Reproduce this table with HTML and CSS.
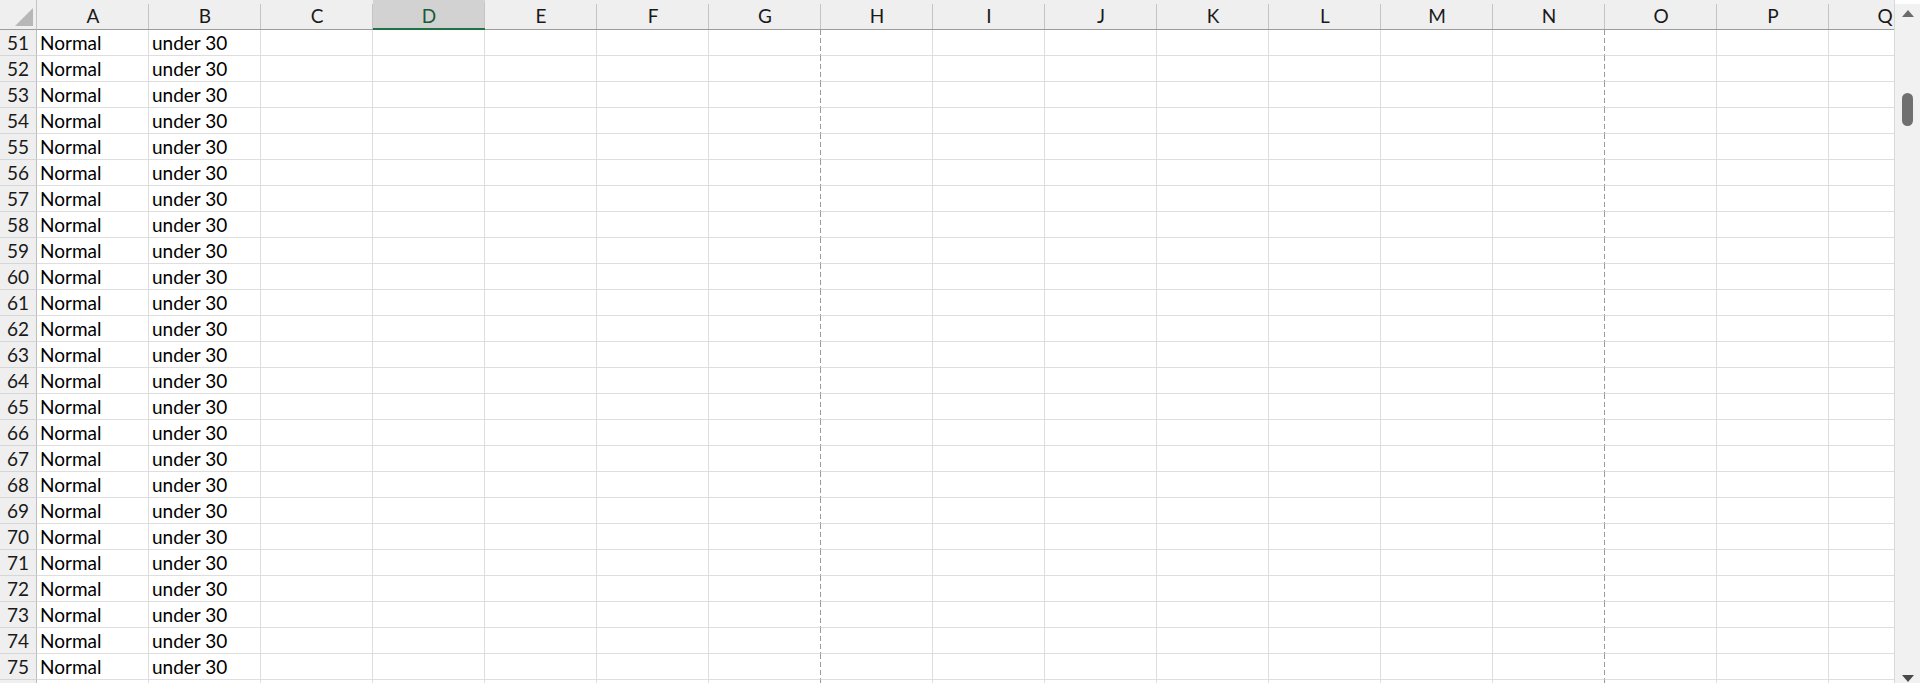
FILE: index.html
```html
<!DOCTYPE html>
<html>
<head>
<meta charset="utf-8">
<link rel="stylesheet" href="styles.css">
</head>
<body>
<div class="app">
  <div class="sheet">
    <table class="grid">
      <colgroup>
        <col class="col-rh"><col><col><col><col><col><col><col><col><col><col><col><col><col><col><col><col><col>
      </colgroup>
      <thead>
        <tr>
          <th class="corner"><span class="tri"></span></th>
          <th>A</th><th>B</th><th>C</th><th class="sel">D</th><th>E</th><th>F</th><th>G</th><th>H</th><th>I</th><th>J</th><th>K</th><th>L</th><th>M</th><th>N</th><th>O</th><th>P</th><th>Q</th>
        </tr>
      </thead>
      <tbody>
        <tr><th>51</th><td>Normal</td><td>under 30</td><td></td><td></td><td></td><td></td><td class="pb"></td><td></td><td></td><td></td><td></td><td></td><td></td><td class="pb"></td><td></td><td></td><td></td></tr>
        <tr><th>52</th><td>Normal</td><td>under 30</td><td></td><td></td><td></td><td></td><td class="pb"></td><td></td><td></td><td></td><td></td><td></td><td></td><td class="pb"></td><td></td><td></td><td></td></tr>
        <tr><th>53</th><td>Normal</td><td>under 30</td><td></td><td></td><td></td><td></td><td class="pb"></td><td></td><td></td><td></td><td></td><td></td><td></td><td class="pb"></td><td></td><td></td><td></td></tr>
        <tr><th>54</th><td>Normal</td><td>under 30</td><td></td><td></td><td></td><td></td><td class="pb"></td><td></td><td></td><td></td><td></td><td></td><td></td><td class="pb"></td><td></td><td></td><td></td></tr>
        <tr><th>55</th><td>Normal</td><td>under 30</td><td></td><td></td><td></td><td></td><td class="pb"></td><td></td><td></td><td></td><td></td><td></td><td></td><td class="pb"></td><td></td><td></td><td></td></tr>
        <tr><th>56</th><td>Normal</td><td>under 30</td><td></td><td></td><td></td><td></td><td class="pb"></td><td></td><td></td><td></td><td></td><td></td><td></td><td class="pb"></td><td></td><td></td><td></td></tr>
        <tr><th>57</th><td>Normal</td><td>under 30</td><td></td><td></td><td></td><td></td><td class="pb"></td><td></td><td></td><td></td><td></td><td></td><td></td><td class="pb"></td><td></td><td></td><td></td></tr>
        <tr><th>58</th><td>Normal</td><td>under 30</td><td></td><td></td><td></td><td></td><td class="pb"></td><td></td><td></td><td></td><td></td><td></td><td></td><td class="pb"></td><td></td><td></td><td></td></tr>
        <tr><th>59</th><td>Normal</td><td>under 30</td><td></td><td></td><td></td><td></td><td class="pb"></td><td></td><td></td><td></td><td></td><td></td><td></td><td class="pb"></td><td></td><td></td><td></td></tr>
        <tr><th>60</th><td>Normal</td><td>under 30</td><td></td><td></td><td></td><td></td><td class="pb"></td><td></td><td></td><td></td><td></td><td></td><td></td><td class="pb"></td><td></td><td></td><td></td></tr>
        <tr><th>61</th><td>Normal</td><td>under 30</td><td></td><td></td><td></td><td></td><td class="pb"></td><td></td><td></td><td></td><td></td><td></td><td></td><td class="pb"></td><td></td><td></td><td></td></tr>
        <tr><th>62</th><td>Normal</td><td>under 30</td><td></td><td></td><td></td><td></td><td class="pb"></td><td></td><td></td><td></td><td></td><td></td><td></td><td class="pb"></td><td></td><td></td><td></td></tr>
        <tr><th>63</th><td>Normal</td><td>under 30</td><td></td><td></td><td></td><td></td><td class="pb"></td><td></td><td></td><td></td><td></td><td></td><td></td><td class="pb"></td><td></td><td></td><td></td></tr>
        <tr><th>64</th><td>Normal</td><td>under 30</td><td></td><td></td><td></td><td></td><td class="pb"></td><td></td><td></td><td></td><td></td><td></td><td></td><td class="pb"></td><td></td><td></td><td></td></tr>
        <tr><th>65</th><td>Normal</td><td>under 30</td><td></td><td></td><td></td><td></td><td class="pb"></td><td></td><td></td><td></td><td></td><td></td><td></td><td class="pb"></td><td></td><td></td><td></td></tr>
        <tr><th>66</th><td>Normal</td><td>under 30</td><td></td><td></td><td></td><td></td><td class="pb"></td><td></td><td></td><td></td><td></td><td></td><td></td><td class="pb"></td><td></td><td></td><td></td></tr>
        <tr><th>67</th><td>Normal</td><td>under 30</td><td></td><td></td><td></td><td></td><td class="pb"></td><td></td><td></td><td></td><td></td><td></td><td></td><td class="pb"></td><td></td><td></td><td></td></tr>
        <tr><th>68</th><td>Normal</td><td>under 30</td><td></td><td></td><td></td><td></td><td class="pb"></td><td></td><td></td><td></td><td></td><td></td><td></td><td class="pb"></td><td></td><td></td><td></td></tr>
        <tr><th>69</th><td>Normal</td><td>under 30</td><td></td><td></td><td></td><td></td><td class="pb"></td><td></td><td></td><td></td><td></td><td></td><td></td><td class="pb"></td><td></td><td></td><td></td></tr>
        <tr><th>70</th><td>Normal</td><td>under 30</td><td></td><td></td><td></td><td></td><td class="pb"></td><td></td><td></td><td></td><td></td><td></td><td></td><td class="pb"></td><td></td><td></td><td></td></tr>
        <tr><th>71</th><td>Normal</td><td>under 30</td><td></td><td></td><td></td><td></td><td class="pb"></td><td></td><td></td><td></td><td></td><td></td><td></td><td class="pb"></td><td></td><td></td><td></td></tr>
        <tr><th>72</th><td>Normal</td><td>under 30</td><td></td><td></td><td></td><td></td><td class="pb"></td><td></td><td></td><td></td><td></td><td></td><td></td><td class="pb"></td><td></td><td></td><td></td></tr>
        <tr><th>73</th><td>Normal</td><td>under 30</td><td></td><td></td><td></td><td></td><td class="pb"></td><td></td><td></td><td></td><td></td><td></td><td></td><td class="pb"></td><td></td><td></td><td></td></tr>
        <tr><th>74</th><td>Normal</td><td>under 30</td><td></td><td></td><td></td><td></td><td class="pb"></td><td></td><td></td><td></td><td></td><td></td><td></td><td class="pb"></td><td></td><td></td><td></td></tr>
        <tr><th>75</th><td>Normal</td><td>under 30</td><td></td><td></td><td></td><td></td><td class="pb"></td><td></td><td></td><td></td><td></td><td></td><td></td><td class="pb"></td><td></td><td></td><td></td></tr>
        <tr class="partial"><th></th><td></td><td></td><td></td><td></td><td></td><td></td><td class="pb"></td><td></td><td></td><td></td><td></td><td></td><td></td><td class="pb"></td><td></td><td></td><td></td></tr>
      </tbody>
    </table>
  </div>
  <div class="vscroll">
    <svg class="arrow up" width="12" height="7" viewBox="0 0 12 7"><polygon points="6,0 12,7 0,7" fill="#6b6b6b"/></svg>
    <div class="thumb"></div>
    <div class="spacer"></div>
    <svg class="arrow down" width="12" height="7" viewBox="0 0 12 7"><polygon points="0,0 12,0 6,7" fill="#4a4a4a"/></svg>
  </div>
</div>
</body>
</html>
```

FILE: styles.css
```css
html, body {
  margin: 0;
  padding: 0;
  background: #ffffff;
}

.app {
  display: flex;
  width: 1920px;
  height: 683px;
  overflow: hidden;
}

.sheet {
  flex: none;
  width: 1894px;
  height: 683px;
  overflow: hidden;
}

.grid {
  table-layout: fixed;
  border-collapse: separate;
  border-spacing: 0;
  width: 1941px;
  font-family: Lato, "Liberation Sans", sans-serif;
  font-size: 19px;
  color: #000000;
}

.grid col {
  width: 112px;
}

.grid col.col-rh {
  width: 37px;
}

.grid thead tr {
  height: 30px;
}

.grid tbody tr {
  height: 26px;
}

.grid th,
.grid td {
  box-sizing: border-box;
  padding: 0;
  line-height: 20px;
  vertical-align: bottom;
  white-space: nowrap;
  overflow: hidden;
}

.grid thead th {
  background-color: #efefef;
  background-image: linear-gradient(#c4c4c4, #c4c4c4);
  background-size: 1px 25px;
  background-position: right bottom;
  background-repeat: no-repeat;
  border-bottom: 1px solid #9c9c9c;
  font-weight: normal;
  text-align: center;
  padding-bottom: 3px;
  color: #1a1a1a;
}

.grid thead th.sel {
  background-color: #d2d2d2;
  border-bottom: 2px solid #217346;
  color: #185c37;
  padding-bottom: 2px;
}

.grid thead th.corner {
  position: relative;
  background-color: #efefef;
  border-right: 1px solid #c4c4c4;
  background-image: none;
}

.tri {
  position: absolute;
  left: 15px;
  top: 8px;
  width: 0;
  height: 0;
  border-left: 18px solid transparent;
  border-bottom: 18px solid #b7b7b7;
}

.grid tbody th {
  background: #efefef;
  border-right: 1px solid #bdbdbd;
  border-bottom: 1px solid #d6d6d6;
  font-weight: normal;
  text-align: center;
  padding-bottom: 2px;
  color: #1a1a1a;
}

.grid tbody td {
  border-right: 1px solid #dedede;
  border-bottom: 1px solid #dedede;
  padding-left: 3px;
  padding-bottom: 2px;
}

.grid tbody td.pb {
  border-right-color: transparent;
  background-image: repeating-linear-gradient(to bottom, #9a9a9a 0 5px, transparent 5px 8px);
  background-size: 1px 100%;
  background-position: right top;
  background-repeat: no-repeat;
  background-origin: border-box;
}

.vscroll {
  flex: none;
  box-sizing: border-box;
  width: 26px;
  height: 683px;
  border-left: 1px solid #d8d8d8;
  background: linear-gradient(#ffffff, #ffffff) top / 100% 4px no-repeat, #f1f1f1;
  display: flex;
  flex-direction: column;
  align-items: flex-start;
}

.arrow {
  display: block;
  margin-left: 7px;
  flex: none;
}

.arrow.up {
  margin-top: 10px;
}

.thumb {
  flex: none;
  margin-top: 76px;
  margin-left: 7px;
  width: 11px;
  height: 33px;
  border-radius: 6px;
  background: #707070;
}

.spacer {
  flex: 1;
}

.arrow.down {
  margin-bottom: 1px;
}
```
